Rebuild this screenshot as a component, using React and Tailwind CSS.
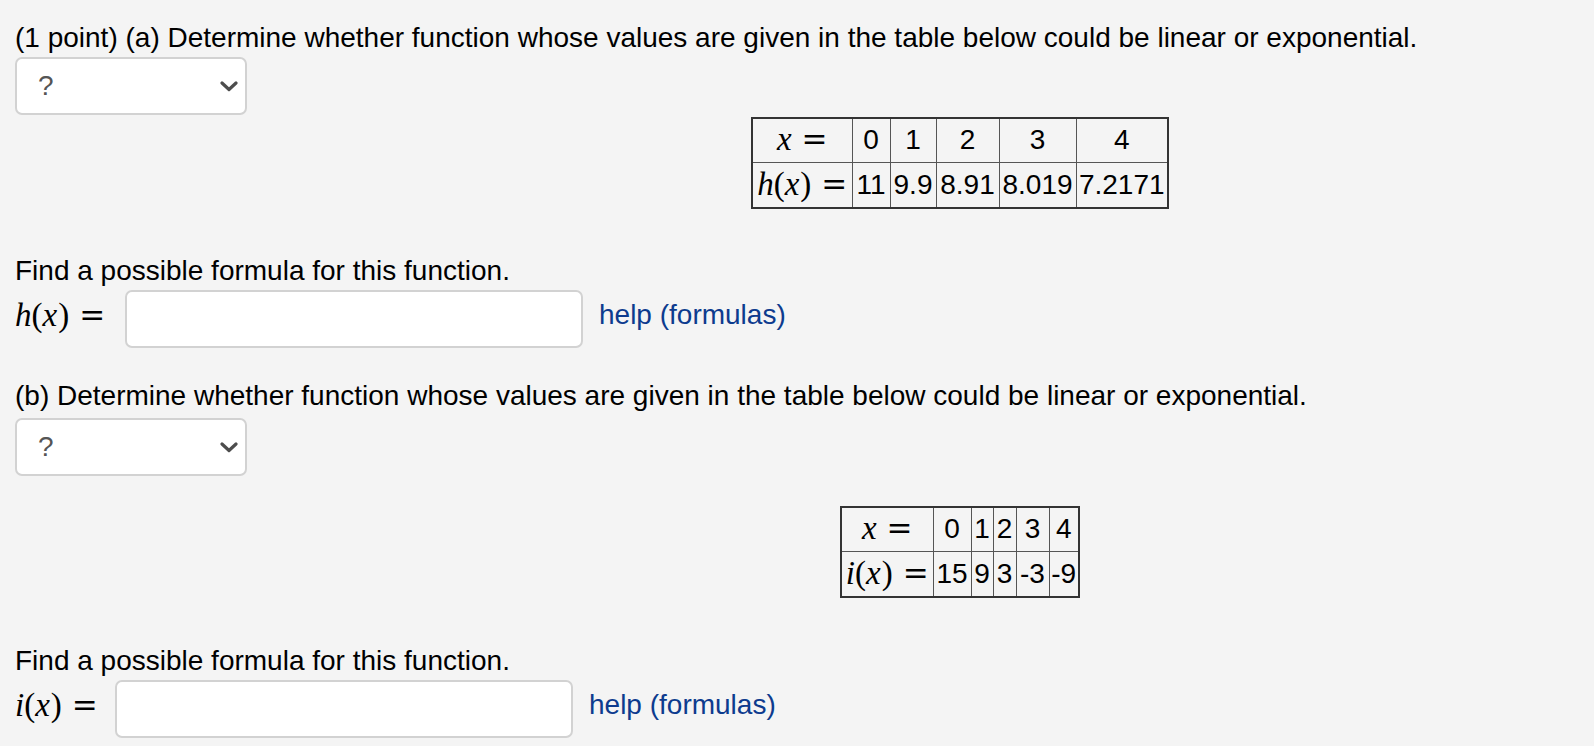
import React from 'react';

const Chevron = () => (
    <svg width="18" height="11" viewBox="0 0 18 11" className="shrink-0">
        <polyline points="2,2 9,8.5 16,2" fill="none" stroke="#4d4d4d" strokeWidth="3.2" strokeLinecap="round" strokeLinejoin="round" />
    </svg>
);

const Select = () => (
    <div className="w-[232px] h-[58px] bg-white border-2 border-[#d2d2d2] rounded-[7px] flex items-center justify-between pl-[21px] pr-[7px]">
        <span className="text-[#555]">?</span>
        <Chevron />
    </div>
);

// math bits in a serif face, italic letters and upright punctuation
const FnLabel = ({ name, eq = true }) => (
    <span className="font-['Liberation_Serif',serif] text-[33px] whitespace-nowrap">
        <i>{name}</i>
        {name !== 'x' && <span>(<i className="pr-[1px]">x</i>)</span>}
        {eq && <span className="ml-[10px] font-['DejaVu_Serif',serif] text-[31px]">=</span>}
    </span>
);

const ValueTable = ({ name, values, widths }) => (
    <div className="w-[1890px] flex justify-center">
        <table className="table-fixed border-collapse border-2 border-[#333]" style={{ width: widths.reduce((a, b) => a + b, 0) }}>
            <colgroup>
                {widths.map((w, i) => <col key={i} style={{ width: w }} />)}
            </colgroup>
            <tbody>
                <tr className="h-[44px]">
                    <td className="border border-[#555] text-center p-0"><FnLabel name="x" /></td>
                    {values.map((v, i) => (
                        <td key={i} className="border border-[#555] text-center p-0">{i}</td>
                    ))}
                </tr>
                <tr className="h-[46px]">
                    <td className="border border-[#555] text-center p-0 whitespace-nowrap"><FnLabel name={name} /></td>
                    {values.map((v, i) => (
                        <td key={i} className="border border-[#555] text-center p-0 whitespace-nowrap">{v}</td>
                    ))}
                </tr>
            </tbody>
        </table>
    </div>
);

const FormulaRow = ({ name, labelWidth }) => (
    <div className="flex items-start">
        <div className="leading-[50px]" style={{ width: labelWidth }}>
            <FnLabel name={name} />
        </div>
        <div className="w-[458px] h-[58px] bg-white border-2 border-[#d2d2d2] rounded-[7px]"></div>
        <a className="ml-[16px] leading-[49px] text-[#0d3b8e] cursor-pointer">help (formulas)</a>
    </div>
);

export default function App() {
    return (
        <div className="min-h-screen w-full overflow-hidden bg-[#f4f4f4] text-black text-[28px] leading-[32px] font-['Liberation_Sans',Arial,sans-serif] px-[15px] pt-[22px]">
            <p>(1 point) (a) Determine whether function whose values are given in the table below could be linear or exponential.</p>
            <div className="mt-[3px]"><Select /></div>
            <div className="mt-[2px]">
                <ValueTable name="h" values={['11', '9.9', '8.91', '8.019', '7.2171']} widths={[100, 38, 46, 63, 77, 92]} />
            </div>

            <p className="mt-[46px]">Find a possible formula for this function.</p>
            <div className="mt-[3px]"><FormulaRow name="h" labelWidth={110} /></div>

            <p className="mt-[32px]">(b) Determine whether function whose values are given in the table below could be linear or exponential.</p>
            <div className="mt-[6px]"><Select /></div>
            <div className="mt-[30px]">
                <ValueTable name="i" values={['15', '9', '3', '-3', '-9']} widths={[92, 38, 22, 23, 33, 30]} />
            </div>

            <p className="mt-[47px]">Find a possible formula for this function.</p>
            <div className="mt-[3px]"><FormulaRow name="i" labelWidth={100} /></div>
        </div>
    );
}
